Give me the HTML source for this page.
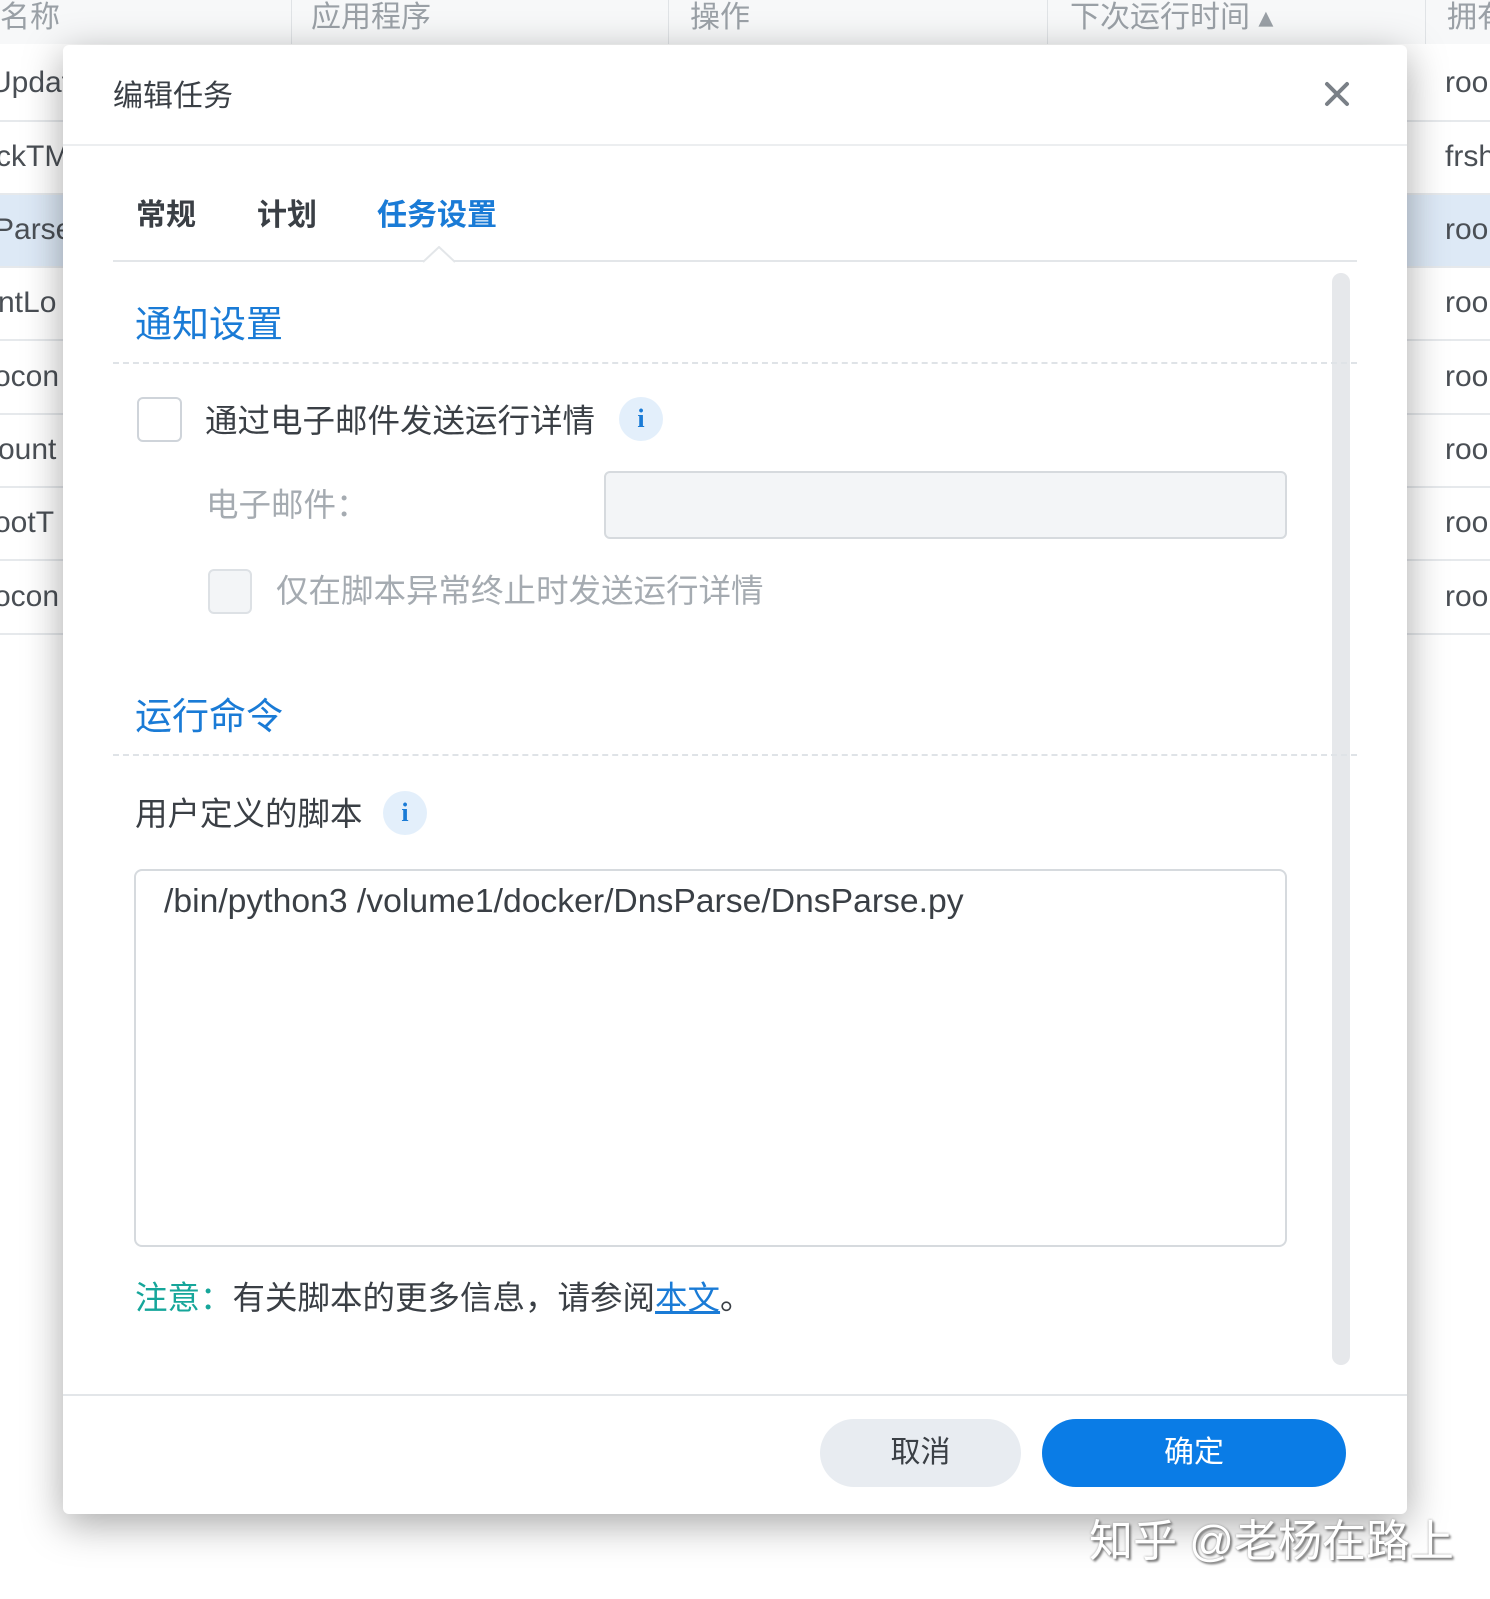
<!DOCTYPE html>
<html><head><meta charset="utf-8"><style>
*{margin:0;padding:0;box-sizing:border-box}
body{width:1490px;height:1599px;position:relative;overflow:hidden;background:#fff;font-family:"Liberation Sans","Noto Sans CJK SC",sans-serif;color:#3a3f45}
.a{position:absolute;white-space:nowrap}
.bgt{font-size:30px;color:#4a4f55}
.hdr{color:#9aa0a6}
.row{position:absolute;left:0;width:1490px;height:73px;border-bottom:2px solid #e6e9ec}
.modal{position:absolute;left:63px;top:45px;width:1344px;height:1469px;background:#fff;border-radius:6px;box-shadow:0 10px 40px rgba(0,0,0,.35)}
.cb{position:absolute;border:2px solid #cfd4da;border-radius:6px;background:#fff}
.info{position:absolute;width:44px;height:44px;border-radius:50%;background:#e3effb;color:#1a7bd6;font-weight:bold;font-family:"Liberation Serif",serif;font-size:26px;text-align:center;line-height:44px}
.h{font-size:37px;color:#1a7bd6}
.dash{position:absolute;left:50px;width:1244px;border-top:2px dashed #dfe3e7}
</style></head><body>
<div class="a" style="left:0;top:0;width:1490px;height:44px;background:#f7f8f9"></div>
<div class="a bgt hdr" style="left:0;top:-8px">名称</div>
<div class="a bgt hdr" style="left:311px;top:-8px">应用程序</div>
<div class="a bgt hdr" style="left:690px;top:-8px">操作</div>
<div class="a bgt hdr" style="left:1070px;top:-8px">下次运行时间 ▴</div>
<div class="a bgt hdr" style="left:1447px;top:-8px">拥有</div>
<div class="a" style="left:291px;top:0;height:44px;border-left:1px solid #e0e3e6"></div>
<div class="a" style="left:668px;top:0;height:44px;border-left:1px solid #e0e3e6"></div>
<div class="a" style="left:1047px;top:0;height:44px;border-left:1px solid #e0e3e6"></div>
<div class="a" style="left:1425px;top:0;height:44px;border-left:1px solid #e0e3e6"></div>
<div class="row" style="top:49px"></div>
<div class="row" style="top:122px"></div>
<div class="row" style="top:195px;background:#dde9f6"></div>
<div class="row" style="top:268px"></div>
<div class="row" style="top:342px"></div>
<div class="row" style="top:415px"></div>
<div class="row" style="top:488px"></div>
<div class="row" style="top:562px"></div>
<div class="a bgt" style="left:-10px;top:66px">Updat</div><div class="a bgt" style="left:1445px;top:66px">roo</div>
<div class="a bgt" style="left:-4px;top:140px">ckTM</div><div class="a bgt" style="left:1445px;top:140px">frsh</div>
<div class="a bgt" style="left:-6px;top:213px">Parse</div><div class="a bgt" style="left:1445px;top:213px">roo</div>
<div class="a bgt" style="left:-2px;top:286px">ntLo</div><div class="a bgt" style="left:1445px;top:286px">roo</div>
<div class="a bgt" style="left:-6px;top:360px">ocon</div><div class="a bgt" style="left:1445px;top:360px">roo</div>
<div class="a bgt" style="left:-2px;top:433px">ount</div><div class="a bgt" style="left:1445px;top:433px">roo</div>
<div class="a bgt" style="left:-6px;top:506px">ootT</div><div class="a bgt" style="left:1445px;top:506px">roo</div>
<div class="a bgt" style="left:-6px;top:580px">ocon</div><div class="a bgt" style="left:1445px;top:580px">roo</div>

<div class="modal">
<div class="a" style="left:50px;top:26px;font-size:30px;color:#3a3f45">编辑任务</div>
<svg class="a" style="left:1261px;top:36px" width="26" height="26"><path d="M3 3L23 23M23 3L3 23" stroke="#7a8087" stroke-width="4" stroke-linecap="round"/></svg>
<div class="a" style="left:0;top:99px;width:1344px;border-top:2px solid #eceef0"></div>
<div class="a" style="left:73px;top:145px;font-size:30px;font-weight:bold;color:#3a3f45">常规</div>
<div class="a" style="left:194px;top:145px;font-size:30px;font-weight:bold;color:#3a3f45">计划</div>
<div class="a" style="left:314px;top:145px;font-size:30px;font-weight:bold;color:#1a7bd6">任务设置</div>
<div class="a" style="left:50px;top:215px;width:1244px;border-top:2px solid #e3e6e9"></div>
<svg class="a" style="left:360px;top:201px" width="32" height="17"><path d="M0 16L16 1L32 16" fill="#fff" stroke="#e3e6e9" stroke-width="2"/></svg>
<div class="a" style="left:1269px;top:228px;width:18px;height:1092px;border-radius:9px;background:#e6e8eb"></div>

<div class="a h" style="left:72px;top:249px">通知设置</div>
<div class="dash" style="top:317px"></div>
<div class="cb" style="left:74px;top:352px;width:45px;height:45px"></div>
<div class="a" style="left:142px;top:350px;font-size:32.5px">通过电子邮件发送运行详情</div>
<div class="info" style="left:556px;top:352px">i</div>
<div class="a" style="left:143px;top:434px;font-size:32.5px;color:#a5abb1">电子邮件：</div>
<div class="a" style="left:541px;top:426px;width:683px;height:68px;border:2px solid #d6dade;border-radius:6px;background:#f3f5f7"></div>
<div class="cb" style="left:145px;top:524px;width:44px;height:45px;background:#f3f5f7;border-color:#dde1e5"></div>
<div class="a" style="left:213px;top:520px;font-size:32.5px;color:#a5abb1">仅在脚本异常终止时发送运行详情</div>

<div class="a h" style="left:72px;top:641px">运行命令</div>
<div class="dash" style="top:709px"></div>
<div class="a" style="left:72px;top:743px;font-size:32.5px">用户定义的脚本</div>
<div class="info" style="left:320px;top:746px">i</div>
<div class="a" style="left:71px;top:824px;width:1153px;height:378px;border:2px solid #d6dade;border-radius:8px"></div>
<div class="a" style="left:101px;top:837px;font-size:33.7px;color:#3a3f45">/bin/python3 /volume1/docker/DnsParse/DnsParse.py</div>
<div class="a" style="left:72px;top:1227px;font-size:32.5px"><span style="color:#16a69a">注意：</span>有关脚本的更多信息，请参阅<span style="color:#1a7bd6;text-decoration:underline">本文</span>。</div>

<div class="a" style="left:0;top:1349px;width:1344px;border-top:2px solid #e3e6e9"></div>
<div class="a" style="left:757px;top:1374px;width:201px;height:68px;border-radius:34px;background:#e8ecf1;font-size:30px;text-align:center;line-height:68px">取消</div>
<div class="a" style="left:979px;top:1374px;width:304px;height:68px;border-radius:34px;background:#0a7ce6;color:#fff;font-size:30px;text-align:center;line-height:68px">确定</div>
</div>
<div class="a" style="left:1089px;top:1505px;font-size:44px;color:#fff;text-shadow:2px 2px 2px #777,0 0 2px #999">知乎 @老杨在路上</div>
</body></html>
